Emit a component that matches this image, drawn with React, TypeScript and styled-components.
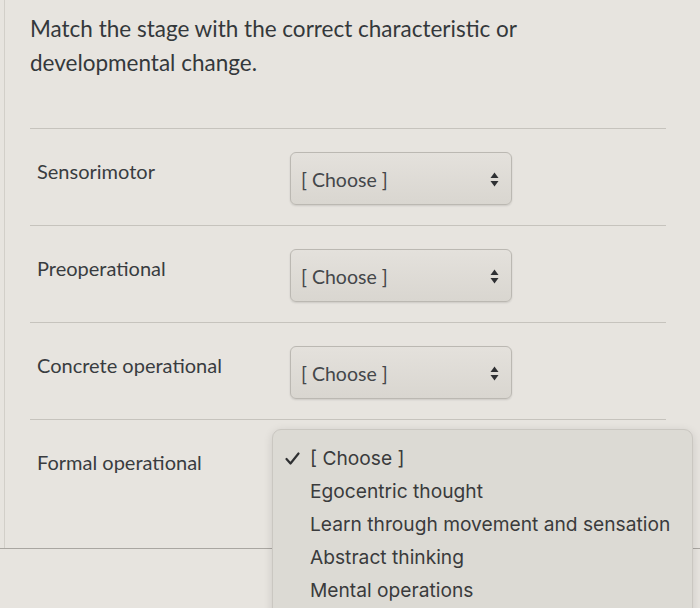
import React from 'react';
import styled, { createGlobalStyle } from 'styled-components';

const GlobalStyle = createGlobalStyle`
    html, body {
        margin: 0;
        padding: 0;
        background: #e7e4df;
    }
    body {
        font-family: Lato, "Open Sans", sans-serif;
        color: #34383b;
        overflow: hidden;
    }
`;

const Page = styled.div`
    width: 700px;
    height: 608px;
    position: relative;
    overflow: hidden;
    background: #e7e4df;
`;
const Card = styled.div`
    height: 548px;
    padding-left: 4px;
    border-bottom: 1px solid #a9a6a1;
`;
const Inner = styled.div`
    height: 100%;
    border-left: 1px solid #d2cfc9;
`;
const Title = styled.h1`
    margin: 0;
    padding: 12px 0 0 25px;
    font-size: 22.5px;
    font-weight: 400;
    line-height: 34px;
    width: 540px;
`;
const List = styled.div`
    margin: 48px 34px 0 25px;
`;
const Row = styled.div`
    display: grid;
    grid-template-columns: 260px 222px;
    height: 96px;
    border-top: 1px solid #c6c3bd;
`;
const Label = styled.div`
    padding: 30px 0 0 7px;
    font-size: 20px;
    line-height: 24px;
    color: #393c3f;
`;
const SelectWrap = styled.div`
    position: relative;
    padding-top: 23px;
`;
const SelectBox = styled.div`
    display: flex;
    align-items: center;
    justify-content: space-between;
    box-sizing: border-box;
    height: 53px;
    padding: 2px 12px 0 10px;
    border: 1px solid #bbb8b2;
    border-radius: 6px;
    background: linear-gradient(#e4e1dc, #d9d6d0);
    box-shadow: 0 1px 2px rgba(0, 0, 0, 0.12);
    font-size: 19.5px;
    color: #44474a;
`;
const Menu = styled.ul`
    position: absolute;
    left: -18px;
    top: 9px;
    width: 419px;
    margin: 0;
    padding: 12px 0 20px;
    list-style: none;
    background: #dcdad4;
    border: 1px solid #cac7c1;
    border-radius: 9px;
    box-shadow: 0 2px 10px rgba(0, 0, 0, 0.12);
    font-family: Inter, "Noto Sans", sans-serif;
`;
const MenuItem = styled.li<{ $checked?: boolean }>`
    position: relative;
    padding-left: 37px;
    height: 33px;
    line-height: 33px;
    font-size: 19.2px;
    color: #3a3b3c;
`;
const Check = styled.svg`
    position: absolute;
    left: 12px;
    top: 10px;
`;

const Arrows = () => (
    <svg width="9" height="15" viewBox="0 0 9 15">
        <path d="M4.5 0.5 L8.5 6 L0.5 6 Z" fill="#2e3033" />
        <path d="M4.5 14.5 L8.5 9 L0.5 9 Z" fill="#2e3033" />
    </svg>
);

const stages = ['Sensorimotor', 'Preoperational', 'Concrete operational', 'Formal operational'];
const options = [
    'Egocentric thought',
    'Learn through movement and sensation',
    'Abstract thinking',
    'Mental operations',
];

const App: React.FunctionComponent = () => {
    return (
        <Page>
            <GlobalStyle />
            <Card>
                <Inner>
                    <Title>Match the stage with the correct characteristic or developmental change.</Title>
                    <List>
                        {stages.map((stage, i) => (
                            <Row key={stage}>
                                <Label>{stage}</Label>
                                <SelectWrap>
                                    {i < 3 ? (
                                        <SelectBox>
                                            <span>[ Choose ]</span>
                                            <Arrows />
                                        </SelectBox>
                                    ) : (
                                        <Menu>
                                            <MenuItem $checked>
                                                <Check width="15" height="13" viewBox="0 0 15 13">
                                                    <path
                                                        d="M1.5 7 L5.5 11.5 L13.5 1.5"
                                                        fill="none"
                                                        stroke="#2f3032"
                                                        strokeWidth="2.2"
                                                        strokeLinecap="round"
                                                        strokeLinejoin="round"
                                                    />
                                                </Check>
                                                [ Choose ]
                                            </MenuItem>
                                            {options.map((o) => (
                                                <MenuItem key={o}>{o}</MenuItem>
                                            ))}
                                        </Menu>
                                    )}
                                </SelectWrap>
                            </Row>
                        ))}
                    </List>
                </Inner>
            </Card>
        </Page>
    );
};

export default App;
